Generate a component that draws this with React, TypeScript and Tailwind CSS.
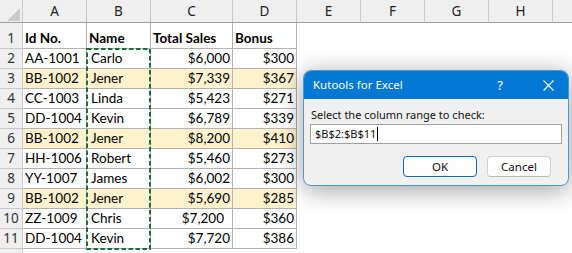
import React from "react";

const data: { a: string; b: string; c: string; d: string; hl?: boolean; cpad?: boolean }[] = [
  { a: "AA-1001", b: "Carlo", c: "$6,000", d: "$300" },
  { a: "BB-1002", b: "Jener", c: "$7,339", d: "$367", hl: true },
  { a: "CC-1003", b: "Linda", c: "$5,423", d: "$271" },
  { a: "DD-1004", b: "Kevin", c: "$6,789", d: "$339" },
  { a: "BB-1002", b: "Jener", c: "$8,200", d: "$410", hl: true },
  { a: "HH-1006", b: "Robert", c: "$5,460", d: "$273" },
  { a: "YY-1007", b: "James", c: "$6,002", d: "$300" },
  { a: "BB-1002", b: "Jener", c: "$5,690", d: "$285", hl: true },
  { a: "ZZ-1009", b: "Chris", c: "$7,200", d: "$360", cpad: true },
  { a: "DD-1004", b: "Kevin", c: "$7,720", d: "$386" },
];

const cellFont = { fontFamily: "Lato, 'Liberation Sans', sans-serif" };
const uiFont = { fontFamily: "'Noto Sans', 'Open Sans', sans-serif" };

function RowHead({ n, h }: { n?: number; h: string }) {
  return (
    <div
      className={`w-[23px] ${h} shrink-0 bg-[#efefef] border-r border-b border-[#c8c8c8] flex items-end justify-center pb-[1px] text-[13.5px] leading-[17px] text-[#333]`}
      style={uiFont}
    >
      {n}
    </div>
  );
}

function Cell({
  children,
  w,
  hl,
  right,
  bold,
  extra = "",
}: {
  children?: React.ReactNode;
  w: string;
  hl?: boolean;
  right?: boolean;
  bold?: boolean;
  extra?: string;
}) {
  return (
    <div
      className={`${w} h-full shrink-0 border-r border-b border-[#b2b2b2] flex items-end pb-[1px] px-[2px] text-[13.5px] leading-[17px] text-black ${
        hl ? "bg-[#fff2cc]" : "bg-white"
      } ${right ? "justify-end" : ""} ${bold ? "font-bold" : ""} ${extra}`}
      style={cellFont}
    >
      {children}
    </div>
  );
}

function Blank() {
  return <div className="flex-1 h-full bg-white" />;
}

export default function App() {
  const colHeads: [string, string][] = [
    ["A", "w-[64px]"],
    ["B", "w-[64px]"],
    ["C", "w-[82px]"],
    ["D", "w-[64px]"],
    ["E", "w-[64px]"],
    ["F", "w-[64px]"],
    ["G", "w-[64px]"],
    ["H", "w-[64px]"],
  ];
  return (
    <div className="relative w-[572px] h-[253px] overflow-hidden bg-white">
      <div className="flex flex-col">
        {/* column header row */}
        <div className="flex h-[23px] bg-[#efefef] border-b border-[#9f9f9f]">
          <div className="w-[23px] h-full shrink-0 border-r border-[#c8c8c8] relative">
            <svg width="22" height="22" className="absolute left-0 top-0">
              <polygon points="7,21 20,21 20,8" fill="#c9c9c9" />
            </svg>
          </div>
          {colHeads.map(([l, w]) => (
            <div
              key={l}
              className={`${w} shrink-0 h-full border-r border-[#c8c8c8] flex items-end justify-center pb-[2px] text-[13.5px] leading-[17px] text-[#222]`}
              style={uiFont}
            >
              {l}
            </div>
          ))}
          <div className="flex-1" />
        </div>

        {/* row 1 */}
        <div className="flex h-[26px]">
          <RowHead n={1} h="h-[26px]" />
          <Cell w="w-[64px]" bold>Id No.</Cell>
          <Cell w="w-[64px]" bold>Name</Cell>
          <Cell w="w-[82px]" bold>Total Sales</Cell>
          <Cell w="w-[64px]" bold>Bonus</Cell>
          <Blank />
        </div>

        {data.map((r, i) => (
          <div key={i} className="flex h-[20px]">
            <RowHead n={i + 2} h="h-[20px]" />
            <Cell w="w-[64px]" hl={r.hl}>{r.a}</Cell>
            <Cell w="w-[64px]" hl={r.hl} extra="pl-[4px]">{r.b}</Cell>
            <Cell w="w-[82px]" hl={r.hl} right extra={r.cpad ? "pr-[8px]" : ""}>
              {r.c}
            </Cell>
            <Cell w="w-[64px]" hl={r.hl} right>{r.d}</Cell>
            <Blank />
          </div>
        ))}

        <div className="flex h-[20px]">
          <RowHead h="h-[20px]" />
          <Blank />
        </div>
      </div>

      {/* marching ants around B2:B11 */}
      <svg className="absolute left-0 top-0 pointer-events-none" width="572" height="253">
        <rect
          x="87"
          y="49"
          width="63"
          height="200"
          fill="none"
          stroke="#1e6b40"
          strokeWidth="2"
          strokeDasharray="4.5 2.5"
        />
      </svg>

      {/* dialog */}
      <div
        className="absolute left-[303px] top-[70px] w-[266px] h-[116px] rounded-[8px] overflow-hidden border border-[#4f97d6] bg-[#f0f0f0] shadow-[0_4px_26px_rgba(0,0,0,0.38)] flex flex-col"
        style={uiFont}
      >
        <div className="h-[28px] shrink-0 bg-[#0078d4] flex items-center pl-[9px] pr-[14px] text-white">
          <span className="text-[11.5px] leading-none">Kutools for Excel</span>
          <span className="ml-auto text-[13px] leading-none mr-[40px]">?</span>
          <svg width="11" height="11" viewBox="0 0 11 11">
            <path d="M0.5 0.5 L10.5 10.5 M10.5 0.5 L0.5 10.5" stroke="white" strokeWidth="1.1" />
          </svg>
        </div>
        <div className="flex-1 flex flex-col px-[6px] pt-[9px]">
          <div className="text-[11px] leading-[14px] text-[#111] pl-[1px]">
            Select the column range to check:
          </div>
          <div className="mt-[2px] h-[20px] bg-white border border-[#a0a0a0] flex items-center pl-[4px] text-[11px] text-[#111]">
            <span>$B$2:$B$11</span>
            <span className="ml-[1px] w-[1px] h-[14px] bg-black" />
          </div>
          <div className="flex justify-end gap-[10px] mt-[12px] pr-[11px]">
            <div className="w-[74px] h-[21px] rounded-[4px] border border-[#0067c0] bg-[#fdfdfd] flex items-center justify-center text-[11.5px] text-[#111]">
              OK
            </div>
            <div className="w-[64px] h-[21px] rounded-[4px] border border-[#cfcfcf] border-b-[#b8b8b8] bg-[#fdfdfd] flex items-center justify-center text-[11.5px] text-[#111]">
              Cancel
            </div>
          </div>
        </div>
      </div>
    </div>
  );
}
